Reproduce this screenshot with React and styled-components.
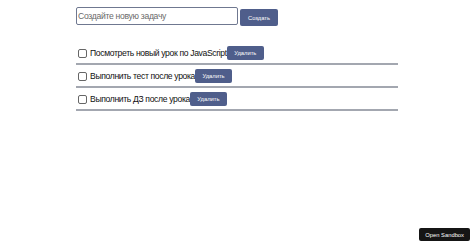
import React, { useState } from "react";
import styled, { createGlobalStyle } from "styled-components";

const GlobalStyle = createGlobalStyle`
  html, body {
    margin: 0;
    padding: 0;
    background: #fff;
    font-family: "Liberation Sans", Arial, sans-serif;
  }
`;

const Page = styled.div`
  width: 322px;
  margin: 0 auto;
  padding-top: 7px;
`;

const Form = styled.form`
  display: flex;
  align-items: flex-start;
  gap: 2px;
`;

const Input = styled.input`
  box-sizing: border-box;
  width: 162px;
  height: 18px;
  padding: 0 1px;
  border: 1px solid #6f7890;
  border-radius: 2px;
  font-family: inherit;
  font-size: 8.6px;
  letter-spacing: -0.3px;
  color: #333;
  outline: none;

  &::placeholder {
    color: #6a6a6a;
  }
`;

const Button = styled.button`
  box-sizing: border-box;
  width: ${p => p.$width || 37}px;
  height: ${p => p.$height || 14}px;
  margin-top: ${p => p.$top || 0}px;
  padding: 0;
  border: none;
  border-radius: 2px;
  background: #4f5e8b;
  color: #fff;
  font-family: inherit;
  font-size: 5.8px;
  cursor: pointer;
`;

const List = styled.ul`
  list-style: none;
  margin: 16px 0 0;
  padding: 0;
`;

const Row = styled.li`
  display: flex;
  align-items: center;
  padding: 4px 0 3px 2px;
  border-bottom: 2px solid #a3a7b0;
  font-size: 8.6px;
  letter-spacing: -0.35px;
  color: #111;
`;

const Check = styled.input.attrs({ type: "checkbox" })`
  appearance: none;
  box-sizing: border-box;
  width: 9px;
  height: 9px;
  margin: 0 3px 0 0;
  border: 1px solid #666;
  border-radius: 2px;
  background: #fff;

  &:checked {
    background: #4f5e8b;
    border-color: #4f5e8b;
  }
`;

const Label = styled.span`
  white-space: nowrap;
`;

const SandboxLink = styled.a`
  position: fixed;
  right: 4px;
  bottom: 7px;
  padding: 4px 6px 3px;
  border-radius: 2px;
  background: #151515;
  color: #fff;
  font-size: 5.8px;
  text-decoration: none;
`;

const initial = [
  { id: 1, title: "Посмотреть новый урок по JavaScript" },
  { id: 2, title: "Выполнить тест после урока" },
  { id: 3, title: "Выполнить ДЗ после урока" },
];

export default function App() {
  const [todos, setTodos] = useState(initial);
  const [text, setText] = useState("");

  const add = e => {
    e.preventDefault();
    if (!text.trim()) return;
    setTodos([...todos, { id: Date.now(), title: text }]);
    setText("");
  };

  return (
    <>
      <GlobalStyle />
      <Page>
        <Form onSubmit={add}>
          <Input
            placeholder="Создайте новую задачу"
            value={text}
            onChange={e => setText(e.target.value)}
          />
          <Button type="submit" $width={38} $height={17} $top={2}>
            Создать
          </Button>
        </Form>
        <List>
          {todos.map(todo => (
            <Row key={todo.id}>
              <Check />
              <Label>{todo.title}</Label>
              <Button
                type="button"
                onClick={() => setTodos(todos.filter(t => t.id !== todo.id))}>
                Удалить
              </Button>
            </Row>
          ))}
        </List>
      </Page>
      <SandboxLink href="#">Open Sandbox</SandboxLink>
    </>
  );
}
